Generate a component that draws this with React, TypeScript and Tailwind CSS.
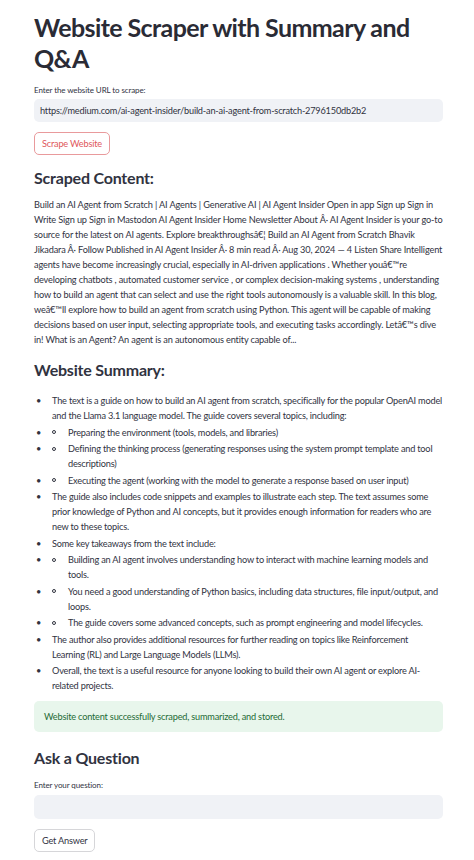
const summary: { text: string; sub?: boolean }[] = [
  {
    text: 'The text is a guide on how to build an AI agent from scratch, specifically for the popular OpenAI model and the Llama 3.1 language model. The guide covers several topics, including:'
  },
  { text: 'Preparing the environment (tools, models, and libraries)', sub: true },
  {
    text: 'Defining the thinking process (generating responses using the system prompt template and tool descriptions)',
    sub: true
  },
  {
    text: 'Executing the agent (working with the model to generate a response based on user input)',
    sub: true
  },
  {
    text: 'The guide also includes code snippets and examples to illustrate each step. The text assumes some prior knowledge of Python and AI concepts, but it provides enough information for readers who are new to these topics.'
  },
  { text: 'Some key takeaways from the text include:' },
  {
    text: 'Building an AI agent involves understanding how to interact with machine learning models and tools.',
    sub: true
  },
  {
    text: 'You need a good understanding of Python basics, including data structures, file input/output, and loops.',
    sub: true
  },
  {
    text: 'The guide covers some advanced concepts, such as prompt engineering and model lifecycles.',
    sub: true
  },
  {
    text: 'The author also provides additional resources for further reading on topics like Reinforcement Learning (RL) and Large Language Models (LLMs).'
  },
  {
    text: 'Overall, the text is a useful resource for anyone looking to build their own AI agent or explore AI-related projects.'
  }
];

const scraped =
  'Build an AI Agent from Scratch | AI Agents | Generative AI | AI Agent Insider Open in app Sign up Sign in Write Sign up Sign in Mastodon AI Agent Insider Home Newsletter About Â· AI Agent Insider is your go-to source for the latest on AI agents. Explore breakthroughsâ€¦ Build an AI Agent from Scratch Bhavik Jikadara Â· Follow Published in AI Agent Insider Â· 8 min read Â· Aug 30, 2024 \u2014 4 Listen Share Intelligent agents have become increasingly crucial, especially in AI-driven applications . Whether youâ€™re developing chatbots , automated customer service , or complex decision-making systems , understanding how to build an agent that can select and use the right tools autonomously is a valuable skill. In this blog, weâ€™ll explore how to build an agent from scratch using Python. This agent will be capable of making decisions based on user input, selecting appropriate tools, and executing tasks accordingly. Letâ€™s dive in! What is an Agent? An agent is an autonomous entity capable of...';

export default function App() {
  return (
    <div className="min-h-screen bg-white text-[#31333f] font-['Lato',sans-serif]">
      <div className="pl-[34px] pr-[31px] pt-[12px] pb-4">
        <h1 className="text-[25px] leading-[31px] font-bold tracking-[-0.6px] text-[#2a2b35]">
          Website Scraper with Summary and Q&amp;A
        </h1>

        <label className="block mt-[10px] text-[8px] leading-[12px] tracking-[-0.1px]">
          Enter the website URL to scrape:
        </label>
        <div className="mt-[3px] h-[23px] rounded-[5px] bg-[#f0f2f6] px-[6px] flex items-center text-[9.2px] tracking-[-0.2px]">
          https://medium.com/ai-agent-insider/build-an-ai-agent-from-scratch-2796150db2b2
        </div>
        <button className="mt-[10px] h-[23px] px-[7px] rounded-[5px] border border-[#e99a9c] text-[9.2px] tracking-[-0.2px] text-[#e0585c]">
          Scrape Website
        </button>

        <h3 className="mt-[12px] text-[16px] leading-[22px] font-bold tracking-[-0.2px]">
          Scraped Content:
        </h3>
        <p className="mt-[8px] text-[9.2px] leading-[15px] tracking-[-0.15px]">{scraped}</p>

        <h3 className="mt-[12px] text-[16px] leading-[22px] font-bold tracking-[-0.2px]">
          Website Summary:
        </h3>
        <ul className="mt-[12px] text-[9.2px] leading-[15px] tracking-[-0.2px]">
          {summary.map((item, i) => (
            <li key={i} className="flex mb-[1.5px]">
              <span className="w-[18px] shrink-0 pl-[2px]">•</span>
              {item.sub && (
                <span className="w-[16px] shrink-0 h-[15px] flex items-center">
                  <span className="block w-[4px] h-[4px] rounded-full border border-[#31333f]" />
                </span>
              )}
              <span>{item.text}</span>
            </li>
          ))}
        </ul>

        <div className="mt-[8px] h-[31px] rounded-[5px] bg-[#e8f6ec] px-[10px] flex items-center text-[9.2px] tracking-[-0.2px] text-[#1e6b36]">
          Website content successfully scraped, summarized, and stored.
        </div>

        <h3 className="mt-[15px] text-[16px] leading-[22px] font-bold tracking-[-0.2px]">
          Ask a Question
        </h3>
        <label className="block mt-[10px] text-[8px] leading-[12px] tracking-[-0.1px]">
          Enter your question:
        </label>
        <div className="mt-[4px] h-[24px] rounded-[5px] bg-[#f0f2f6]" />
        <button className="mt-[10px] h-[23px] px-[7px] rounded-[5px] border border-[#d6d6d9] text-[9.2px] tracking-[-0.2px]">
          Get Answer
        </button>
      </div>
    </div>
  );
}
